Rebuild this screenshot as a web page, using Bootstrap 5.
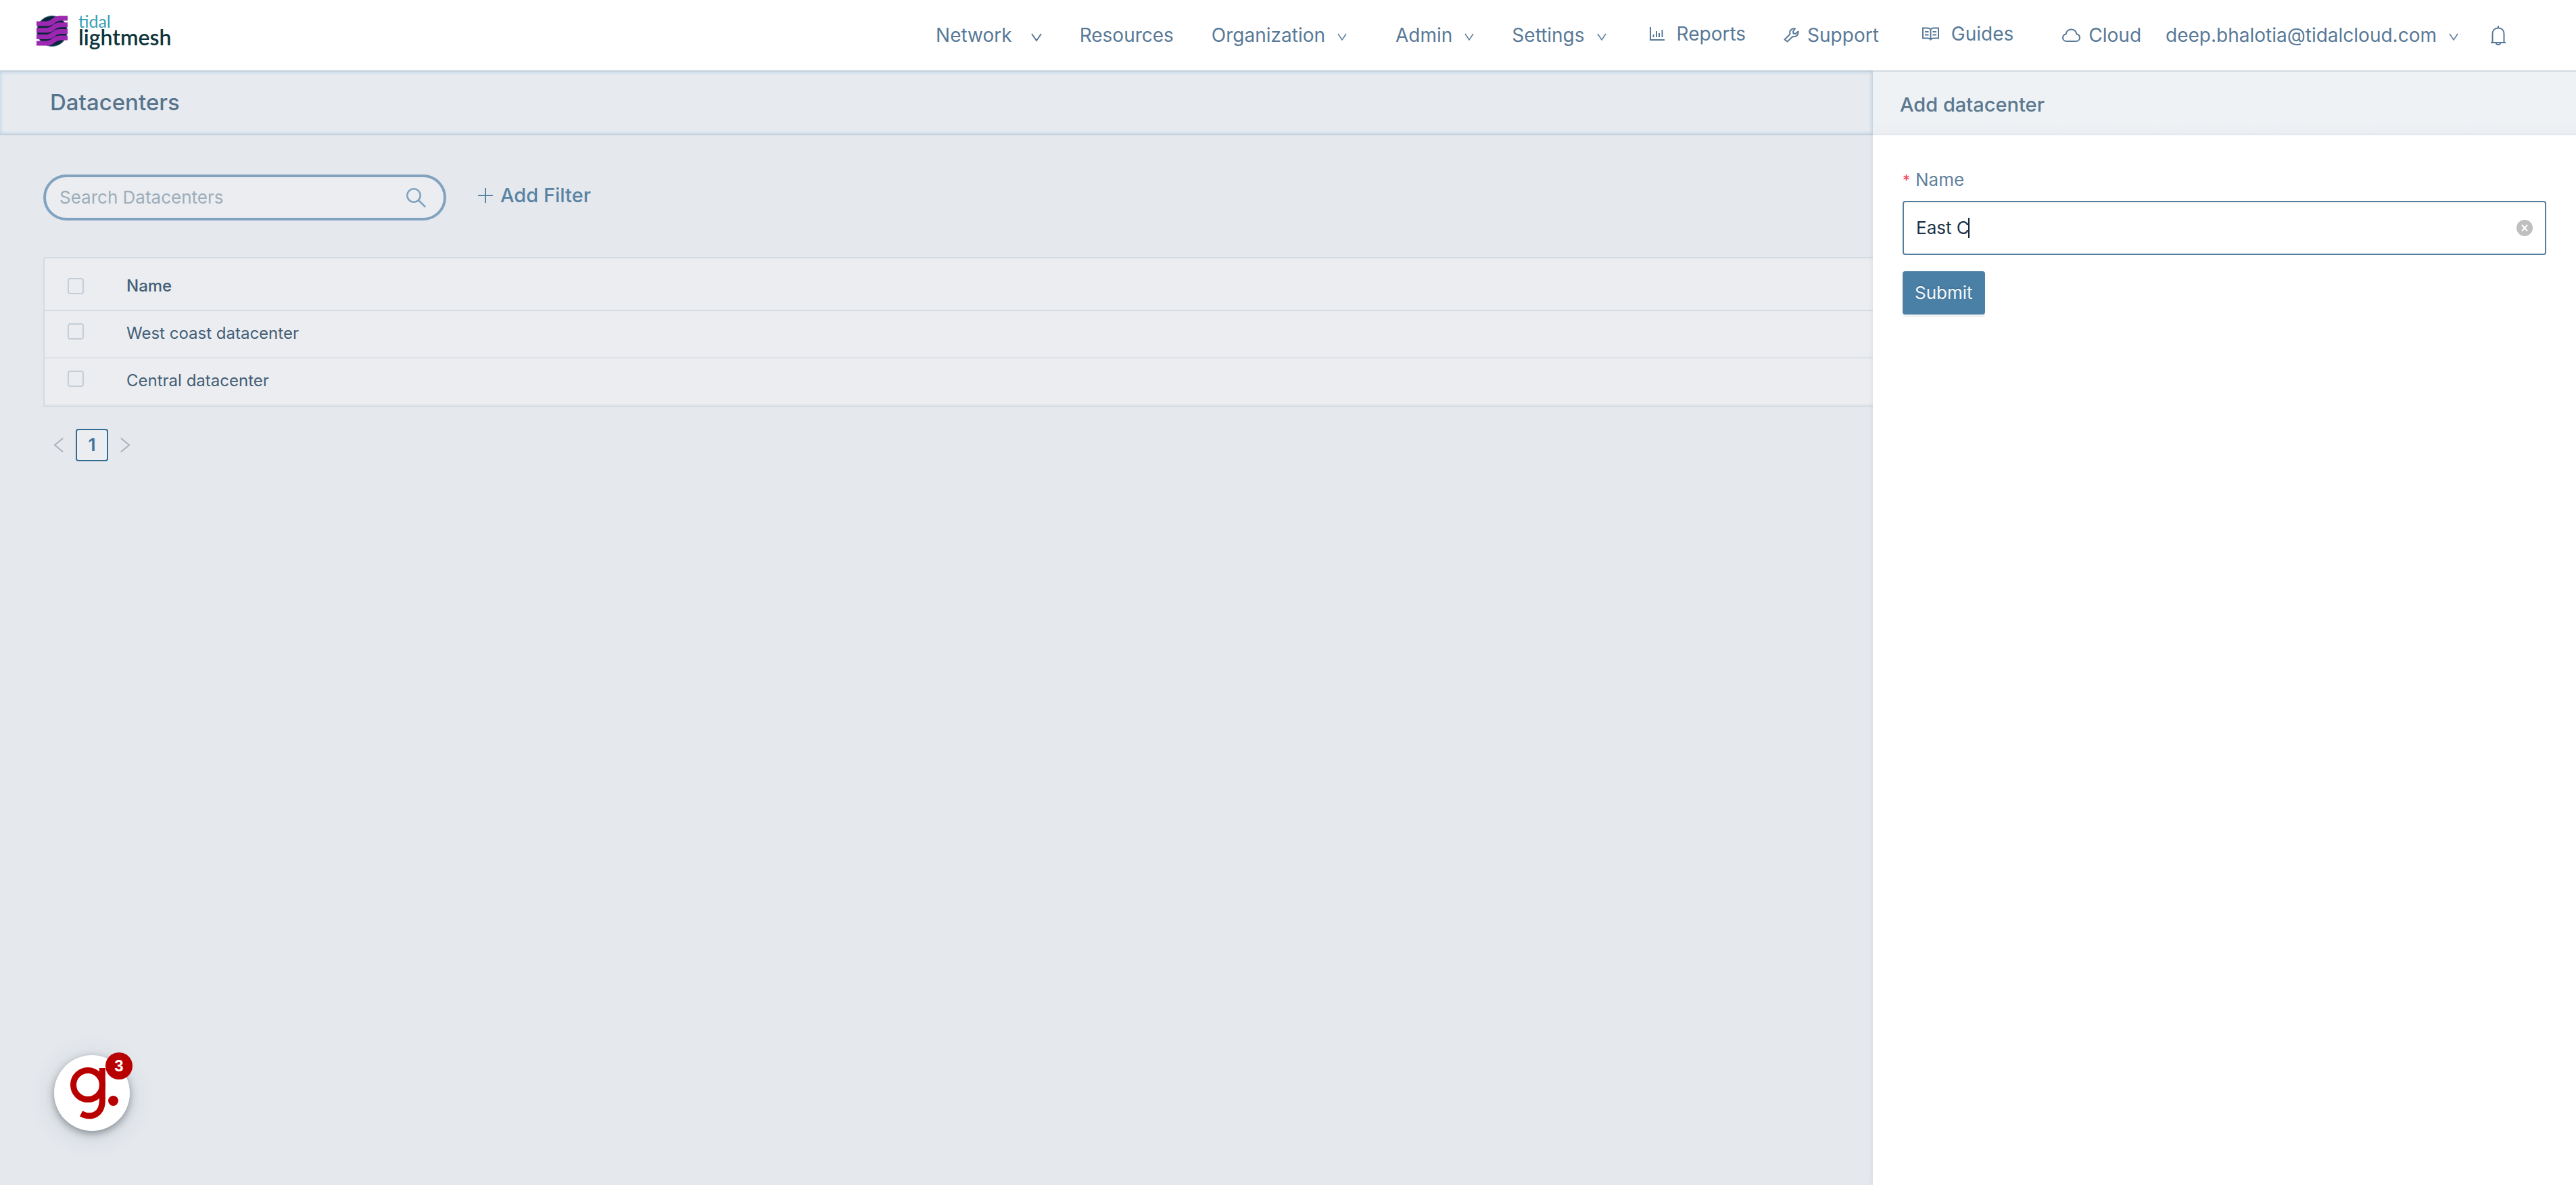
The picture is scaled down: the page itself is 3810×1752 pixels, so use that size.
<!DOCTYPE html>
<html lang="en">
<head>
<meta charset="utf-8">
<meta name="viewport" content="width=device-width, initial-scale=1">
<title>Datacenters</title>
<link href="https://cdn.jsdelivr.net/npm/bootstrap@5.3.0/dist/css/bootstrap.min.css" rel="stylesheet">
<style>
body{font-family:Inter,"Liberation Sans",sans-serif;font-size:26px;line-height:36px;color:#445e75;background:#e5e9ee}
a{text-decoration:none;color:inherit}
svg{display:block;flex:none;fill:none;stroke:currentColor}
.topbar{height:104px;padding:0 104px 0 54px;background:#fff;color:#587997;font-size:28px}
.brand-link{padding-bottom:16px}
.brand-logo{margin-top:4px}
.brand-text{font-family:Lato,sans-serif;margin-left:16px}
.brand-tidal{font-size:25px;line-height:24px;color:#35a0b4}
.brand-name{font-size:32px;line-height:24px;font-weight:600;color:#0e353b}
.topnav a,.topnav button{display:flex;align-items:center;white-space:nowrap;color:inherit}
.topnav button{border:0;background:none;padding:0}
.g-36{margin-right:36px}.g-48{margin-right:48px}.g-56{margin-right:56px}.g-64{margin-right:64px}.g-72{margin-right:72px}
.ic-12{gap:12px}.ic-18{gap:18px}.ic-28{gap:28px}
.chev{margin-top:6px}
.raised{padding-bottom:4px}
.pagehead{height:96px;padding:0 74px;border-top:2px solid #c5d0d9;border-bottom:2px solid #c5d0d9;background:#e7ebf0;box-shadow:inset 0 0 5px 1px #bfd4e6}
.pagehead h1{font-size:33px;font-weight:500;color:#57748c;margin:0}
.pagebody{padding:58px 0 0 64px}
.searchbox{width:596px;height:68px;border:4px solid #81a3bf;border-radius:34px;background:#ebedf1;padding:0 26px 0 20px;color:#81a3bf}
.searchbox input{border:0;background:none;outline:0;font-size:26px;color:#445e75;min-width:0;padding:0}
.searchbox input::placeholder{color:#9dadba;opacity:1}
.addfilter{border:0;background:none;padding:0;margin-left:47px;gap:11px;font-size:29px;font-weight:500;color:#5883a3;height:62px}
.dc-table{margin:54px 0 0;width:100%;border:2px solid #d5dce1;border-right:0;border-collapse:separate;border-spacing:0;border-radius:4px 0 0 0;background:#ebedf1;font-size:24px}
.dc-table th,.dc-table td{padding:0;vertical-align:middle;border-bottom:2px solid #dfe2e7}
.dc-table th{height:78px;padding-top:6px;font-weight:500;border-color:#d5dce1}
.dc-table td{height:70px;padding-bottom:2px}
.dc-table .pick{width:121px;padding-left:34px}
.dc-table td.pick{padding-bottom:8px}
.tick{appearance:none;display:block;width:24px;height:24px;margin:0;border:2px solid #c5ced7;border-radius:4px;background:#ebedf1}
.pager{margin-top:32px;padding-left:16px;gap:18px;color:#adb2b8}
.pager button{border:0;background:none;padding:0;color:inherit}
.pager .current{width:48px;height:48px;border:2px solid #336b93;border-radius:4px;background:#ebedf1;color:#3d7197;font-weight:600}
.drawer{width:1040px;background:#fff;box-shadow:0 0 8px rgba(60,70,90,.1)}
.drawer-head{height:96px;border-top:2px solid #d3dadf;background:linear-gradient(#eef2f5 80%,#ebeef2 96%,#e3e6ea);padding:0 40px;color:#5a788f}
.drawer-head h2{font-size:29px;font-weight:500;margin:4px 0 0}
.drawer-form{padding:48px 44px}
.drawer-form label{color:#62809a;display:flex;gap:8px}
.req{color:#ee3c53;font-size:22px}
.namebox{height:80px;margin-top:13px;border:2px solid #557d98;border-radius:4px;padding:0 18px}
.namebox input{border:0;outline:0;padding:0;font-size:26px;color:#1b344a;min-width:0}
.caret{position:absolute;left:95px;top:23px;width:2px;height:30px;background:#12283b}
.submit{margin-top:24px;height:64px;padding:0 18px;border:0;border-radius:4px;background:#4a7fa6;color:#f2f7fb;box-shadow:0 4px 0 #f2f2f3;text-shadow:0 -2px 0 rgba(0,0,0,.12)}
.clearbtn{border:0;background:none;padding:0}
.helper{position:fixed;left:80px;bottom:80px;width:112px;height:112px;border:0;padding:0;border-radius:50%;background:#fff;box-shadow:0 4px 12px rgba(40,50,60,.45),0 6px 40px rgba(40,50,60,.14);color:#b90000}
.helper-count{position:absolute;left:76px;top:-4px;width:40px;height:40px;border-radius:50%;background:#b90000;color:#fff;font:700 24px/40px "Liberation Sans",sans-serif}
</style>
</head>
<body>
<div class="min-vh-100 d-flex flex-column">
<header class="topbar d-flex align-items-center position-relative z-1">
  <a href="#" class="brand-link d-flex align-items-start">
    <svg class="brand-logo" width="46" height="46" viewBox="0 0 46 46" stroke="none"><circle cx="23" cy="23" r="22.5" fill="#08263a"/>
      <g fill="#9c27b0" stroke="none"><path id="wave" d="M0 8.500H12C25 8.500 22 .500 36 .500H46V7.500H38C25 7.500 28 15.500 14 15.500H0Z"/><use href="#wave" y="9.700"/><use href="#wave" y="19.400"/><use href="#wave" y="29.100"/></g>
    </svg>
    <span class="brand-text d-flex flex-column"><span class="brand-tidal">tidal</span><span class="brand-name">lightmesh</span></span>
  </a>
  <nav class="topnav d-flex align-items-center ms-auto">
    <button type="button" class="g-56 ic-28">Network<svg class="chev" width="16" height="13" viewBox="0 0 16 13" stroke-width="2"><path d="M1 1l7 10 7-10"/></svg></button>
    <a href="#" class="g-56">Resources</a>
    <button type="button" class="g-72 ic-18">Organization<svg class="chev" width="14" height="12" viewBox="0 0 14 12" stroke-width="1.500"><path d="M1 1l6 9 6-9"/></svg></button>
    <button type="button" class="g-56 ic-18">Admin<svg class="chev" width="14" height="12" viewBox="0 0 14 12" stroke-width="1.500"><path d="M1 1l6 9 6-9"/></svg></button>
    <button type="button" class="g-64 ic-18">Settings<svg class="chev" width="14" height="12" viewBox="0 0 14 12" stroke-width="1.500"><path d="M1 1l6 9 6-9"/></svg></button>
    <a href="#" class="g-56 ic-18 raised"><svg width="22" height="20" viewBox="0 0 22 20" stroke-width="2"><path d="M1 0v19h21M5.500 11v4M10 6v9M14 9v6M18.500 4v11"/></svg>Reports</a>
    <a href="#" class="g-64 ic-12"><svg width="23" height="22" viewBox="0 0 23 22" stroke-width="2" stroke-linejoin="round"><path d="M1.500 17.500L9.500 9.500C8 4.500 12 .500 17 1.500L14 5.500 14.500 8.500 17.500 9 21.500 5.500C22.500 10.500 18.500 14 13.500 13L5.500 20.500Z"/></svg>Support</a>
    <a href="#" class="g-72 ic-18 raised"><svg width="25" height="20" viewBox="0 0 25 20" stroke-width="2"><path d="M1 1.500H8Q11 1.500 12.500 3.500 14 1.500 17 1.500H24V16.500H17Q14 16.500 12.500 18.500 11 16.500 8 16.500H1ZM12.500 3.500V18M4 7h5.500M4 11.500h5.500M15.500 7H21M15.500 11.500H21"/></svg>Guides</a>
    <a href="#" class="g-36 ic-12"><svg width="27" height="20" viewBox="0 0 27 20" stroke-width="2"><path d="M6.500 19C3 19 1 16.500 1 13.800 1 11 3 9 5.500 8.500 6.500 4 9.500 1.500 13.500 1.500S20.500 4 21.500 8.500C24 9 26 11 26 13.800 26 16.500 24 19 20.500 19Z"/></svg>Cloud</a>
    <button type="button" class="g-48 ic-18">deep.bhalotia@tidalcloud.com<svg class="chev" width="14" height="12" viewBox="0 0 14 12" stroke-width="1.500"><path d="M1 1l6 9 6-9"/></svg></button>
    <button type="button" aria-label="Notifications"><svg width="22" height="29" viewBox="0 0 22 29" stroke-width="2"><path d="M0 25H22M2.500 25V12C2.500 6.500 6 3.500 11 3.500S19.500 6.500 19.500 12V25M11 0V3.500M7.800 25.500C8 29 14 29 14.200 25.500"/></svg></button>
  </nav>
</header>
<div class="d-flex flex-grow-1">
  <main class="flex-grow-1">
    <div class="pagehead d-flex align-items-center"><h1>Datacenters</h1></div>
    <div class="pagebody">
      <div class="d-flex align-items-start">
        <div class="searchbox d-flex align-items-center">
          <input type="search" class="flex-grow-1" placeholder="Search Datacenters" aria-label="Search Datacenters">
          <svg width="29" height="29" viewBox="0 0 29 29" stroke-width="2.500"><circle cx="11" cy="11" r="9.700"/><path d="M18 18l10 10"/></svg>
        </div>
        <button type="button" class="addfilter d-flex align-items-center"><svg width="22" height="22" viewBox="0 0 22 22" stroke-width="2"><path d="M11 0v22M0 11h22"/></svg>Add Filter</button>
      </div>
      <table class="dc-table">
        <thead><tr><th class="pick"><input type="checkbox" class="tick" aria-label="Select all"></th><th>Name</th></tr></thead>
        <tbody>
          <tr><td class="pick"><input type="checkbox" class="tick" aria-label="Select West coast datacenter"></td><td>West coast datacenter</td></tr>
          <tr><td class="pick"><input type="checkbox" class="tick" aria-label="Select Central datacenter"></td><td>Central datacenter</td></tr>
        </tbody>
      </table>
      <div class="pager d-flex align-items-center">
        <button type="button" aria-label="Previous page"><svg width="14" height="22" viewBox="0 0 14 22" stroke-width="2"><path d="M13 1L1 11l12 10"/></svg></button>
        <button type="button" class="current">1</button>
        <button type="button" aria-label="Next page"><svg width="14" height="22" viewBox="0 0 14 22" stroke-width="2"><path d="M1 1l12 10L1 21"/></svg></button>
      </div>
    </div>
  </main>
  <aside class="drawer flex-shrink-0">
    <div class="drawer-head d-flex align-items-center"><h2>Add datacenter</h2></div>
    <form class="drawer-form">
      <label for="dc-name"><span class="req">*</span>Name</label>
      <div class="namebox d-flex align-items-center position-relative">
        <input id="dc-name" type="text" class="flex-grow-1" value="East C"><span class="caret"></span>
        <button type="button" class="clearbtn" aria-label="Clear"><svg width="24" height="24" viewBox="0 0 24 24"><circle cx="12" cy="12" r="12" fill="#bfbfbf" stroke="none"/><path d="M8 7.500l8 9M16 7.500l-8 9" stroke="#fff" stroke-width="2"/></svg></button>
      </div>
      <button type="button" class="submit">Submit</button>
    </form>
  </aside>
</div>
</div>
<button type="button" class="helper" aria-label="Open guide">
  <svg width="112" height="112" viewBox="0 0 112 112" stroke-width="9"><circle cx="50" cy="44" r="21.500" /><path d="M71.300 19V67C71.300 86 57 95 40 86.500"/><circle cx="87.500" cy="67.500" r="7.500" fill="currentColor" stroke="none"/></svg>
  <span class="helper-count">3</span>
</button>
<script src="https://cdn.jsdelivr.net/npm/bootstrap@5.3.0/dist/js/bootstrap.bundle.min.js"></script>
</body>
</html>
